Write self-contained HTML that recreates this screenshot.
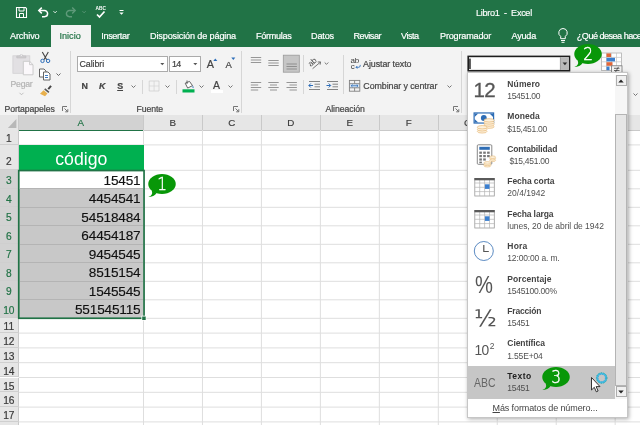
<!DOCTYPE html>
<html lang="es">
<head>
<meta charset="utf-8">
<title>Libro1 - Excel</title>
<style>
html,body{margin:0;padding:0;}
body{width:640px;height:425px;overflow:hidden;position:relative;background:#fff;will-change:transform;font-family:"Liberation Sans",sans-serif;font-size:9px;color:#444;}
.abs{position:absolute;}
#top{left:0;top:0;width:640px;height:47px;background:#217346;}
.tab{position:absolute;top:30.5px;color:#fff;-webkit-text-stroke:0.2px currentColor;font-size:9.1px;line-height:11px;white-space:nowrap;}
#inicio{left:51px;top:25px;width:39.5px;height:22px;background:#f3f3f3;}
#inicio span{position:absolute;left:8.5px;top:5.5px;color:#217346;-webkit-text-stroke:0.2px currentColor;font-size:9.1px;line-height:11px;}
#title{left:476px;top:8px;-webkit-text-stroke:0.15px currentColor;letter-spacing:-0.3px;color:#fff;font-size:9.1px;line-height:11px;white-space:nowrap;}
#ribbon{left:0;top:47px;width:640px;height:68px;background:#f3f3f3;}
.rt{position:absolute;font-size:8.7px;letter-spacing:-0.08px;-webkit-text-stroke:0.2px currentColor;line-height:11px;color:#444;white-space:nowrap;}
.vsep{position:absolute;width:1px;background:#d6d6d6;}
/* sheet */
#sheet{left:0;top:115px;width:640px;height:310px;background:#fff;}
.colh{position:absolute;top:0;height:14.8px;background:#e6e6e6;color:#3a3a3a;font-size:9.8px;-webkit-text-stroke:0.15px currentColor;line-height:15.3px;text-align:center;border-right:1px solid #c9c9c9;box-sizing:border-box;}
.rowh{position:absolute;left:0;width:18.7px;background:#e6e6e6;color:#3a3a3a;font-size:10.2px;-webkit-text-stroke:0.2px currentColor;text-align:center;border-bottom:1px solid #cfcfcf;border-right:1px solid #c9c9c9;box-sizing:border-box;}
.rowh.sel{background:#d2d2d2;color:#217346;border-right:1.5px solid #217346;}
.hl{position:absolute;left:18.7px;width:622px;height:1px;background:#d9d9d9;}
.vl{position:absolute;top:15px;width:1px;height:310px;background:#d9d9d9;}
.num{position:absolute;left:18.7px;width:121.8px;text-align:right;color:#111;-webkit-text-stroke:0.15px currentColor;font-size:13.6px;letter-spacing:-0.17px;line-height:18.4px;height:18.4px;}
/* dropdown */
#dd{left:467px;top:72px;width:159.4px;height:344.3px;background:#fff;border:1px solid #c6c6c6;box-sizing:content-box;box-shadow:0.5px 1px 4px rgba(0,0,0,.33);}
.it{position:absolute;left:0.3px;width:146.5px;height:32.45px;}
.it b{position:absolute;left:39px;top:5.2px;font-size:8.5px;line-height:11px;color:var(--tc,#444);white-space:nowrap;}
.it i{position:absolute;left:39px;top:17.4px;font-style:normal;font-size:8.5px;line-height:11px;color:#505050;white-space:nowrap;}
.ic{position:absolute;left:5.7px;top:3px;width:26px;height:26px;}
</style>
</head>
<body>
<div id="top" class="abs"></div>
<div id="title" class="abs">Libro1 &nbsp;-&nbsp; Excel</div>
<div class="tab" style="left:10.0px;letter-spacing:-0.11px">Archivo</div>
<div id="inicio" class="abs"><span>Inicio</span></div>
<div class="tab" style="left:101.2px;letter-spacing:-0.32px">Insertar</div>
<div class="tab" style="left:150.0px;letter-spacing:-0.14px">Disposición de página</div>
<div class="tab" style="left:256.0px;letter-spacing:-0.30px">Fórmulas</div>
<div class="tab" style="left:311.0px;letter-spacing:-0.16px">Datos</div>
<div class="tab" style="left:353.5px;letter-spacing:-0.47px">Revisar</div>
<div class="tab" style="left:401.0px;letter-spacing:-0.52px">Vista</div>
<div class="tab" style="left:440.0px;letter-spacing:-0.19px">Programador</div>
<div class="tab" style="left:511.5px;letter-spacing:-0.22px">Ayuda</div>
<div class="tab" style="left:576.8px;letter-spacing:-0.52px">¿Qué desea hace</div>
<div id="ribbon" class="abs"></div>
<!-- quick access toolbar -->
<svg class="abs" style="left:0;top:0" width="160" height="25" viewBox="0 0 160 25">
 <g fill="none" stroke="#fff" stroke-width="1.1">
  <path d="M16.5 7.5h9l1 1v9h-10z"/><path d="M19 7.5v3.5h5v-3.5M19.5 17.5v-4h4v4" stroke-width="1"/>
  <path d="M39 10.5h5.5a3 3 0 0 1 0 6.2h-2.5" stroke-width="1.5"/><path d="M41.8 7.6l-3 2.9 3 2.9" stroke-width="1.5"/>
  <path d="M53.5 11.2l1.6 1.6 1.6-1.6" stroke-width="0.9"/>
  <g stroke="#5f9a7a"><path d="M75 10.5h-5.500a3 3 0 0 0 0 6.2h2.500" stroke-width="1.4"/><path d="M72.2 7.600l3 2.900-3 2.900" stroke-width="1.4"/><path d="M82.500 11.200l1.600 1.600 1.600-1.600" stroke-width="0.9"/></g>
  <path d="M97 14.500l2.500 2.500 5-5.500" stroke-width="1.700"/>
  <path d="M119.500 10.500h4" stroke-width="1"/>
 </g>
 <path d="M119.300 12.500h4.400l-2.200 2.300z" fill="#fff"/>
 <text x="95.500" y="10" font-family="Liberation Sans, sans-serif" font-size="4.800" font-weight="bold" fill="#fff">ABC</text>
</svg>
<!-- lightbulb -->
<svg class="abs" style="left:556px;top:27px" width="14" height="17" viewBox="0 0 14 17"><g fill="none" stroke="#fff" stroke-width="1"><path d="M7 1.500a4.300 4.300 0 0 0-2.300 7.900v2.300h4.600v-2.300a4.300 4.300 0 0 0-2.300-7.900z"/><path d="M5 13.500h4M5.500 15.300h3"/></g></svg>

<!-- Clipboard group -->
<svg class="abs" style="left:10px;top:50px" width="26" height="28" viewBox="10 50 26 28">
 <rect x="12.900" y="55.800" width="16.900" height="17.500" fill="#e2e0e3" stroke="#d2d0d3" stroke-width="0.800"/>
 <path d="M16.800 57.900v-1.900h2.800a1.800 1.800 0 0 1 3.500 0h2.800v1.900z" fill="#d0ced1" stroke="#c2c0c3" stroke-width="0.700"/>
 <circle cx="21.350" cy="55.300" r="0.700" fill="#f3f3f3"/>
 <path d="M23.300 61.300h6.300l3.400 3.400v10.100h-9.700z" fill="#fbf8fb" stroke="#c6c6c6" stroke-width="0.900"/>
 <path d="M29.600 61.300v3.400h3.400" fill="none" stroke="#c6c6c6" stroke-width="0.900"/>
</svg>
<div class="rt" style="left:10.500px;top:78.5px;color:#b4b4b4;letter-spacing:-0.25px">Pegar</div>
<svg class="abs" style="left:18px;top:91px" width="8" height="6"><path d="M1.500 1.800l2 2 2-2" fill="none" stroke="#b8b8b8" stroke-width="0.9"/></svg>
<!-- scissors -->
<svg class="abs" style="left:39px;top:50px" width="13" height="14" viewBox="0 0 13 14"><g fill="none"><path d="M3.300 2l4.400 7.700M9.300 2l-4.400 7.700" stroke="#444" stroke-width="1.100"/><circle cx="3.500" cy="10.900" r="1.700" stroke="#2b6cb8" stroke-width="1"/><circle cx="9.100" cy="10.900" r="1.700" stroke="#2b6cb8" stroke-width="1"/></g></svg>
<!-- copy -->
<svg class="abs" style="left:38px;top:68px" width="14" height="13" viewBox="0 0 14 13"><g fill="#fff" stroke="#555" stroke-width="0.9"><path d="M1.500 1h4.500l2 2v6h-6.500z"/><path d="M5.500 4h4.500l2 2v6h-6.500z"/></g><path d="M7 7.500h3M7 9.500h3" stroke="#2b6cb8" stroke-width="0.900"/></svg>
<svg class="abs" style="left:54.500px;top:71.500px" width="8" height="6"><path d="M1.500 1.500l2 2 2-2" fill="none" stroke="#555" stroke-width="0.900"/></svg>
<!-- format painter -->
<svg class="abs" style="left:39px;top:84px" width="14" height="13" viewBox="0 0 14 13"><path d="M8.500 4.500l2.800-3.200 1.500 1.300-2.800 3.200z" fill="#444"/><path d="M6.200 4.300l4.200 3.500-1 1.200-4.200-3.500z" fill="#555"/><path d="M4.600 6.200l3.900 3.300-2.500 2.800-5-2.500z" fill="#e8b04c"/></svg>
<div class="rt" style="left:4.500px;top:103.500px">Portapapeles</div>
<svg class="abs lau" style="left:62px;top:106px" width="7" height="7" viewBox="0 0 7 7"><path d="M0.500 5v-4.500h4.500" fill="none" stroke="#666" stroke-width="0.900"/><path d="M2.500 2.500l3 3M5.800 3.200v2.600h-2.600" fill="none" stroke="#666" stroke-width="0.900"/></svg>
<div class="vsep" style="left:69.800px;top:50.500px;height:62px"></div>

<!-- Font group -->
<div class="abs" style="left:76.700px;top:55.500px;width:91px;height:16.500px;background:#fff;border:1px solid #ababab;box-sizing:border-box"></div>
<div class="rt" style="left:79.500px;top:58.500px;font-size:8.9px">Calibri</div>
<svg class="abs" style="left:158.500px;top:61.500px" width="7" height="5"><path d="M1.300 1h4l-2 2.300z" fill="#555"/></svg>
<div class="abs" style="left:169.300px;top:55.500px;width:31.500px;height:16.500px;background:#fff;border:1px solid #ababab;box-sizing:border-box"></div>
<div class="rt" style="left:172px;top:58.500px;font-size:8.9px;letter-spacing:-0.7px">14</div>
<svg class="abs" style="left:192px;top:61.500px" width="7" height="5"><path d="M1.300 1h4l-2 2.300z" fill="#555"/></svg>
<div class="rt" style="left:206.800px;top:57.800px;font-size:10.800px;line-height:13px">A</div>
<svg class="abs" style="left:212.500px;top:57.500px" width="5" height="4"><path d="M0.300 3l2-2.500 2 2.500z" fill="#2b6cb8"/></svg>
<div class="rt" style="left:225.500px;top:59px;font-size:9.500px;line-height:11px">A</div>
<svg class="abs" style="left:231px;top:57px" width="5" height="4"><path d="M0.300 0.500h4l-2 2.500z" fill="#2b6cb8"/></svg>
<div class="rt" style="left:81.500px;top:80.500px;font-weight:bold;font-size:8.9px">N</div>
<div class="rt" style="left:99px;top:80.500px;font-weight:bold;font-style:italic;font-size:8.9px">K</div>
<div class="rt" style="left:117.200px;top:80.500px;font-weight:bold;font-size:8.9px;text-decoration:underline">S</div>
<svg class="abs" style="left:130px;top:83.500px" width="8" height="6"><path d="M1.500 1.500l2 2 2-2" fill="none" stroke="#666" stroke-width="0.900"/></svg>
<div class="vsep" style="left:142.200px;top:80px;height:14px"></div>
<svg class="abs" style="left:148px;top:80px" width="12" height="12" viewBox="0 0 12 12"><g fill="none" stroke="#c8c8c8" stroke-width="0.650"><path d="M1.200 1h9.800v10h-9.800z"/><path d="M6.100 1v10M1.200 6h9.800" stroke="#d0d0d0"/></g></svg>
<svg class="abs" style="left:164px;top:83.500px" width="8" height="6"><path d="M1.500 1.500l2 2 2-2" fill="none" stroke="#666" stroke-width="0.900"/></svg>
<div class="vsep" style="left:175.700px;top:80px;height:14px"></div>
<svg class="abs" style="left:182px;top:79px" width="14" height="14" viewBox="0 0 14 14"><path d="M5 1.500v3.500M3.200 4.200l4.300-1.800 3 4.200-4.800 2.500z" fill="#fff" stroke="#555" stroke-width="0.900"/><path d="M10.800 6.500q1.600 2 0.300 2.800q-1.300-0.600-0.300-2.800z" fill="#2b6cb8"/><rect x="0.500" y="10.300" width="12" height="3.200" fill="#00b050"/></svg>
<svg class="abs" style="left:198px;top:83.500px" width="8" height="6"><path d="M1.500 1.500l2 2 2-2" fill="none" stroke="#666" stroke-width="0.900"/></svg>
<div class="rt" style="left:213px;top:79px;font-size:10.500px;line-height:12px">A</div>
<div class="abs" style="left:211px;top:90.200px;width:12px;height:2.600px;background:#fff"></div>
<svg class="abs" style="left:227px;top:83.500px" width="8" height="6"><path d="M1.500 1.500l2 2 2-2" fill="none" stroke="#666" stroke-width="0.900"/></svg>
<div class="rt" style="left:136.500px;top:103.500px">Fuente</div>
<svg class="abs lau" style="left:233px;top:106px" width="7" height="7" viewBox="0 0 7 7"><path d="M0.500 5v-4.500h4.500" fill="none" stroke="#666" stroke-width="0.900"/><path d="M2.500 2.500l3 3M5.800 3.200v2.600h-2.600" fill="none" stroke="#666" stroke-width="0.900"/></svg>
<div class="vsep" style="left:240.800px;top:50.500px;height:62px"></div>

<!-- Alignment group -->
<svg class="abs" style="left:250px;top:54px" width="55" height="20" viewBox="0 0 55 20">
 <rect x="33.300" y="1.200" width="16" height="17" fill="#c6c6c6" stroke="#9a9a9a" stroke-width="0.800"/>
 <g stroke="#858585" stroke-width="0.850"><path d="M0.800 3.500h10.400M0.800 6h10.400M0.800 8.500h10.400"/><path d="M18.300 6.500h10.400M18.300 9h10.400M18.300 11.500h10.400"/><path d="M36.500 10h10.400M36.500 12.500h10.400M36.500 15h10.400"/></g>
</svg>
<div class="vsep" style="left:302.800px;top:55px;height:17px"></div>
<svg class="abs" style="left:250px;top:80px" width="55" height="13" viewBox="0 0 55 13">
 <g stroke="#858585" stroke-width="0.850"><path d="M0.800 2.500h10.400M0.800 5h7.400M0.800 7.500h10.400M0.800 10h7.400"/><path d="M18.300 2.500h10.400M20 5h7M18.300 7.500h10.400M20 10h7"/><path d="M36.500 2.500h10.400M39.500 5h7.400M36.500 7.500h10.400M39.500 10h7.400"/></g>
</svg>
<div class="vsep" style="left:302.800px;top:80px;height:14px"></div>
<!-- orientation -->
<svg class="abs" style="left:305px;top:52px" width="20" height="20" viewBox="305 52 20 20"><text x="312.300" y="64.800" text-anchor="middle" font-family="Liberation Sans, sans-serif" font-size="8.200" fill="#4a4a4a" transform="rotate(-42 312.300 62.200)" letter-spacing="-0.3">ab</text><path d="M312.600 68.700l7.500-6.300M317.700 62l2.900-0.100-0.500 2.800" fill="none" stroke="#666" stroke-width="0.900"/></svg>
<svg class="abs" style="left:322.800px;top:61px" width="8" height="6"><path d="M1.700 1.500l1.800 1.800 1.800-1.800" fill="none" stroke="#666" stroke-width="0.900"/></svg>
<!-- indent icons -->
<svg class="abs" style="left:308px;top:80px" width="32" height="13" viewBox="0 0 32 13">
 <g stroke="#777" stroke-width="0.900"><path d="M1 1.500h11M6.500 4.200h5.500M6.500 6.800h5.500M1 9.500h11"/><path d="M19 1.500h11M24.500 4.200h5.500M24.500 6.800h5.500M19 9.500h11"/></g>
 <g stroke="#2b6cb8" stroke-width="1" fill="none"><path d="M5 5.500h-4M2.800 3.500l-2 2 2 2"/><path d="M18.500 5.500h4M20.700 3.500l2 2-2 2"/></g>
</svg>
<div class="vsep" style="left:343px;top:55px;height:39px"></div>
<!-- wrap text -->
<svg class="abs" style="left:349px;top:55px" width="14" height="16" viewBox="0 0 14 16"><text x="1.500" y="7.800" font-family="Liberation Sans, sans-serif" font-size="8" fill="#3a3a3a" letter-spacing="-0.3">ab</text><text x="1.800" y="13.600" font-family="Liberation Sans, sans-serif" font-size="8" fill="#3a3a3a">c</text><path d="M7 12.300h2.600a1.600 1.600 0 0 0 1.600-1.600v-0.800M8.300 11l-1.300 1.300 1.300 1.300" fill="none" stroke="#2b6cb8" stroke-width="0.900"/></svg>
<div class="rt" style="left:363.100px;top:58.700px;font-size:8.9px">Ajustar texto</div>
<!-- merge -->
<svg class="abs" style="left:348px;top:79px" width="14" height="14" viewBox="348 79 14 14"><rect x="349.500" y="83.800" width="10.200" height="3.800" fill="#d6e6f7"/><g fill="none" stroke="#808080" stroke-width="0.900"><rect x="349.400" y="80.400" width="10.400" height="10.800"/><path d="M349.400 83.700h10.400M349.400 87.800h10.400M354.600 80.400v3.300M354.600 87.800v3.400"/></g><path d="M351.300 85.750h6.600M352.500 84.500l-1.300 1.250 1.300 1.250M356.700 84.500l1.300 1.250-1.300 1.250" fill="none" stroke="#2b6cb8" stroke-width="0.800"/></svg>
<div class="rt" style="left:363.300px;top:81.200px;font-size:8.9px">Combinar y centrar</div>
<svg class="abs" style="left:445.500px;top:84px" width="8" height="6"><path d="M1.500 1.500l2 2 2-2" fill="none" stroke="#666" stroke-width="0.900"/></svg>
<div class="rt" style="left:325.500px;top:103.500px">Alineación</div>
<svg class="abs lau" style="left:452.500px;top:106px" width="7" height="7" viewBox="0 0 7 7"><path d="M0.500 5v-4.500h4.500" fill="none" stroke="#666" stroke-width="0.900"/><path d="M2.500 2.500l3 3M5.800 3.200v2.600h-2.600" fill="none" stroke="#666" stroke-width="0.900"/></svg>
<div class="vsep" style="left:460.500px;top:50.500px;height:62px"></div>

<!-- Number format combo -->
<svg class="abs" style="left:460px;top:50px" width="120" height="26" viewBox="460 50 120 26">
 <rect x="468.200" y="56.400" width="101.300" height="14.300" fill="#fff" stroke="#1e1e1e" stroke-width="1.600"/>
 <rect x="560.400" y="57.200" width="8.400" height="12.700" fill="#b9b9b9"/>
 <path d="M560.400 57.200v12.700" stroke="#8a8a8a" stroke-width="0.800" fill="none"/>
 <path d="M562.600 62.600h4.600l-2.300 2.600z" fill="#2a2a2a"/>
 <rect x="469.200" y="58.600" width="1.500" height="10.400" fill="#222"/>
</svg>
<!-- conditional formatting icon -->
<svg class="abs" style="left:601px;top:52px" width="23" height="21" viewBox="0 0 23 21">
 <rect x="0.500" y="1" width="20" height="17.500" fill="#fff" stroke="#b0b0b0" stroke-width="0.800"/>
 <path d="M0.500 5.400h20M0.500 9.800h20M0.500 14.200h20M5.500 1v17.500M10.500 1v17.500M15.500 1v17.500" stroke="#c4c4c4" stroke-width="0.700" fill="none"/>
 <rect x="5.500" y="1.400" width="4.500" height="3.600" fill="#e0673a"/><rect x="5.500" y="5.800" width="8.500" height="3.600" fill="#3b7fcf"/><rect x="5.500" y="10.200" width="6" height="3.600" fill="#e0673a"/><rect x="5.500" y="14.600" width="3" height="3.600" fill="#3b7fcf"/>
 <rect x="10.500" y="13.800" width="10.500" height="7" fill="#f3f3f3" stroke="#777" stroke-width="0.800"/>
 <path d="M13 16.300h5.500M13 18.500h5.500M17.500 14.800l-3 5.300" stroke="#444" stroke-width="0.800" fill="none"/>
</svg>
<svg class="abs" style="left:631.500px;top:92px" width="8" height="6"><path d="M1.500 1.500l2 2 2-2" fill="none" stroke="#666" stroke-width="0.900"/></svg>

<div id="sheet" class="abs">
<div class="abs" style="left:0;top:0;width:18.7px;height:14.8px;background:#e6e6e6;border-right:1px solid #c9c9c9;box-sizing:border-box"></div>
<svg class="abs" style="left:7px;top:3.8px" width="11" height="10"><path d="M9.4 0V9H0.9Z" fill="#b8b8b8"/></svg>
<div class="colh" style="left:18.7px;width:125.2px;background:#d2d2d2;color:#217346;border-bottom:1.6px solid #217346;line-height:15.3px;height:15.6px;overflow:hidden;">A</div>
<div class="colh" style="left:143.9px;width:59.0px;">B</div>
<div class="colh" style="left:202.9px;width:59.0px;">C</div>
<div class="colh" style="left:261.8px;width:59.0px;">D</div>
<div class="colh" style="left:320.8px;width:59.0px;">E</div>
<div class="colh" style="left:379.7px;width:59.0px;">F</div>
<div class="colh" style="left:438.7px;width:59.0px;">G</div>
<div class="colh" style="left:497.7px;width:59.0px;">H</div>
<div class="colh" style="left:556.6px;width:59.0px;">I</div>
<div class="colh" style="left:615.6px;width:59.0px;">J</div>
<div class="abs" style="left:0;top:14.6px;width:18.7px;height:1px;background:#c9c9c9"></div>
<div class="abs" style="left:143.9px;top:14.6px;width:497px;height:1px;background:#c9c9c9"></div>
<div class="rowh" style="top:15.00px;height:14.90px;line-height:18.00px">1</div>
<div class="rowh" style="top:29.90px;height:25.40px;line-height:33.50px">2</div>
<div class="rowh sel" style="top:55.30px;height:18.50px;line-height:22.80px">3</div>
<div class="rowh sel" style="top:73.80px;height:18.50px;line-height:22.80px">4</div>
<div class="rowh sel" style="top:92.30px;height:18.50px;line-height:22.80px">5</div>
<div class="rowh sel" style="top:110.80px;height:18.50px;line-height:22.80px">6</div>
<div class="rowh sel" style="top:129.30px;height:18.50px;line-height:22.80px">7</div>
<div class="rowh sel" style="top:147.80px;height:18.50px;line-height:22.80px">8</div>
<div class="rowh sel" style="top:166.30px;height:18.50px;line-height:22.80px">9</div>
<div class="rowh sel" style="top:184.80px;height:18.50px;line-height:22.80px">10</div>
<div class="rowh" style="top:203.30px;height:14.80px;line-height:17.90px">11</div>
<div class="rowh" style="top:218.10px;height:14.80px;line-height:17.90px">12</div>
<div class="rowh" style="top:232.90px;height:14.80px;line-height:17.90px">13</div>
<div class="rowh" style="top:247.70px;height:14.80px;line-height:17.90px">14</div>
<div class="rowh" style="top:262.50px;height:14.80px;line-height:17.90px">15</div>
<div class="rowh" style="top:277.30px;height:14.80px;line-height:17.90px">16</div>
<div class="rowh" style="top:292.10px;height:14.80px;line-height:17.90px">17</div>
<div class="rowh" style="top:306.90px;height:14.80px;line-height:17.90px">18</div>
<svg class="abs" style="left:0;top:0" width="640" height="310"><path d="M18.7 29.90H640M18.7 55.30H640M18.7 73.80H640M18.7 92.30H640M18.7 110.80H640M18.7 129.30H640M18.7 147.80H640M18.7 166.30H640M18.7 184.80H640M18.7 203.30H640M18.7 218.10H640M18.7 232.90H640M18.7 247.70H640M18.7 262.50H640M18.7 277.30H640M18.7 292.10H640M18.7 306.90H640M18.7 321.70H640M143.50 15V310M202.46 15V310M261.42 15V310M320.38 15V310M379.34 15V310M438.30 15V310M497.26 15V310M556.22 15V310M615.18 15V310M674.14 15V310" fill="none" stroke="#dedede" stroke-width="1"/></svg>
<div class="abs" style="left:18.7px;top:29.60px;width:125.3px;height:25.70px;background:#00b050;color:#fff;font-size:17.7px;line-height:28.5px;text-align:center">código</div>
<div class="abs" style="left:18.7px;top:73.80px;width:124.9px;height:129.50px;background:#c8c8c8"></div>
<div class="abs" style="left:18.7px;top:55.30px;width:124.9px;height:18.52px;background:#fff"></div>
<div class="abs" style="left:19.7px;top:73.20px;width:123.3px;height:1px;background:#b4b4b4"></div>
<div class="abs" style="left:19.7px;top:91.70px;width:123.3px;height:1px;background:#b4b4b4"></div>
<div class="abs" style="left:19.7px;top:110.20px;width:123.3px;height:1px;background:#b4b4b4"></div>
<div class="abs" style="left:19.7px;top:128.70px;width:123.3px;height:1px;background:#b4b4b4"></div>
<div class="abs" style="left:19.7px;top:147.20px;width:123.3px;height:1px;background:#b4b4b4"></div>
<div class="abs" style="left:19.7px;top:165.70px;width:123.3px;height:1px;background:#b4b4b4"></div>
<div class="abs" style="left:19.7px;top:184.20px;width:123.3px;height:1px;background:#b4b4b4"></div>
<div class="num" style="top:56.60px">15451</div>
<div class="num" style="top:75.10px">4454541</div>
<div class="num" style="top:93.60px">54518484</div>
<div class="num" style="top:112.10px">64454187</div>
<div class="num" style="top:130.60px">9454545</div>
<div class="num" style="top:149.10px">8515154</div>
<div class="num" style="top:167.60px">1545545</div>
<div class="num" style="top:186.10px">551545115</div>
<svg class="abs" style="left:0;top:0" width="160" height="310"><rect x="18.75" y="55.55" width="125.3" height="147.70" fill="none" stroke="#217346" stroke-width="1.7"/><rect x="141.4" y="200.70" width="5" height="5" fill="#fff"/><rect x="142.2" y="201.50" width="3.5" height="3.5" fill="#217346"/></svg>
</div>
<div id="dd" class="abs">
<div class="it" style="top:0.70px;"><div class="abs" style="left:5.2px;top:6.1px;font-size:20.5px;line-height:20px;color:#555;letter-spacing:-0.600px;-webkit-text-stroke:0.3px #555">12</div><b style="letter-spacing:0.13px">Número</b><i style="letter-spacing:-0.32px">15451.00</i></div>
<div class="it" style="top:33.15px;"><svg class="abs" style="left:4.200px;top:5px" width="26" height="24" viewBox="0 0 26 24"><rect x="2.100" y="1.950" width="19.500" height="10.100" fill="#fff" stroke="#2e6db5" stroke-width="1.200"/><ellipse cx="11.800" cy="7" rx="2.900" ry="2.900" fill="#2e6db5"/><path d="M2.600 2.500h3.600l-3.600 3.600zM21.100 2.500h-3.600l3.600 3.600zM2.600 11.500h3.600l-3.600-3.600z" fill="#2e6db5"/><ellipse cx="17.05" cy="15.65" rx="5.15" ry="1.70" fill="#fdf1dc" stroke="#e6b877" stroke-width="0.70"/><ellipse cx="17.05" cy="13.55" rx="5.15" ry="1.70" fill="#fdf1dc" stroke="#e6b877" stroke-width="0.70"/><ellipse cx="17.05" cy="11.45" rx="5.15" ry="1.70" fill="#fdf1dc" stroke="#e6b877" stroke-width="0.70"/><ellipse cx="17.05" cy="9.35" rx="5.15" ry="1.70" fill="#fdf1dc" stroke="#e6b877" stroke-width="0.70"/><ellipse cx="10.15" cy="20.35" rx="4.85" ry="1.70" fill="#fdf1dc" stroke="#e6b877" stroke-width="0.70"/><ellipse cx="10.15" cy="18.30" rx="4.85" ry="1.70" fill="#fdf1dc" stroke="#e6b877" stroke-width="0.70"/><ellipse cx="10.15" cy="16.25" rx="4.85" ry="1.70" fill="#fdf1dc" stroke="#e6b877" stroke-width="0.70"/></svg><b style="letter-spacing:0.06px">Moneda</b><i style="letter-spacing:-0.30px">$15,451.00</i></div>
<div class="it" style="top:65.60px;"><svg class="abs" style="left:6.7px;top:5.2px" width="24" height="24" viewBox="0 0 24 24"><rect x="2.300" y="0.800" width="14.500" height="19.500" rx="1" fill="#fff" stroke="#7a7a7a" stroke-width="0.900"/><rect x="4.300" y="2.800" width="10.500" height="3" fill="#2e6db5"/><g fill="#777"><rect x="4.300" y="7.600" width="2.600" height="2.200"/><rect x="8.200" y="7.600" width="2.600" height="2.200"/><rect x="12.100" y="7.600" width="2.600" height="2.200"/><rect x="4.300" y="11" width="2.600" height="2.200"/><rect x="8.200" y="11" width="2.600" height="2.200"/><rect x="12.100" y="11" width="2.600" height="2.200"/><rect x="4.300" y="14.400" width="2.600" height="2.200"/><rect x="8.200" y="14.400" width="2.600" height="2.200"/><rect x="4.300" y="17.600" width="2.600" height="1.600"/></g><ellipse cx="17.65" cy="16.30" rx="2.95" ry="1.30" fill="#fdf1dc" stroke="#e6b877" stroke-width="0.60"/><ellipse cx="17.65" cy="14.75" rx="2.95" ry="1.30" fill="#fdf1dc" stroke="#e6b877" stroke-width="0.60"/><ellipse cx="17.65" cy="13.20" rx="2.95" ry="1.30" fill="#fdf1dc" stroke="#e6b877" stroke-width="0.60"/><ellipse cx="12.40" cy="21.70" rx="3.50" ry="1.30" fill="#fdf1dc" stroke="#e6b877" stroke-width="0.60"/><ellipse cx="12.40" cy="20.30" rx="3.50" ry="1.30" fill="#fdf1dc" stroke="#e6b877" stroke-width="0.60"/><ellipse cx="12.40" cy="18.90" rx="3.50" ry="1.30" fill="#fdf1dc" stroke="#e6b877" stroke-width="0.60"/></svg><b style="letter-spacing:-0.13px">Contabilidad</b><i style="letter-spacing:-0.27px">&nbsp;$15,451.00</i></div>
<div class="it" style="top:98.05px;"><svg class="abs" style="left:5.8px;top:5.6px" width="22" height="21" viewBox="0 0 22 21"><rect x="0.800" y="1.500" width="19.500" height="17.500" fill="#fff" stroke="#9a9a9a" stroke-width="0.800"/><path d="M0.800 6h19.500M0.800 10.300h19.500M0.800 14.600h19.500M5.700 3v16M10.600 3v16M15.500 3v16" stroke="#b4b4b4" stroke-width="0.700" fill="none"/><rect x="0.400" y="1" width="20.300" height="2.300" fill="#5a5a5a"/><rect x="10.900" y="7.300" width="4.600" height="4.600" fill="#3b7fcf"/></svg><b style="letter-spacing:-0.06px">Fecha corta</b><i style="letter-spacing:0.03px">20/4/1942</i></div>
<div class="it" style="top:130.50px;"><svg class="abs" style="left:5.8px;top:5.3px" width="22" height="21" viewBox="0 0 22 21"><rect x="0.800" y="1.500" width="19.500" height="17.500" fill="#fff" stroke="#9a9a9a" stroke-width="0.800"/><path d="M0.800 6h19.500M0.800 10.300h19.500M0.800 14.600h19.500M5.700 3v16M10.600 3v16M15.500 3v16" stroke="#b4b4b4" stroke-width="0.700" fill="none"/><rect x="0.400" y="1" width="20.300" height="2.300" fill="#5a5a5a"/><rect x="10.900" y="7.300" width="4.600" height="4.600" fill="#3b7fcf"/></svg><b style="letter-spacing:-0.10px">Fecha larga</b><i style="letter-spacing:-0.05px">lunes, 20 de abril de 1942</i></div>
<div class="it" style="top:162.95px;"><svg class="abs" style="left:5px;top:4.100px" width="22" height="22" viewBox="0 0 22 22"><circle cx="10.800" cy="11" r="9.500" fill="#fff" stroke="#4a7ebb" stroke-width="0.900"/><path d="M10.800 5v6.500h5" fill="none" stroke="#555" stroke-width="1.200"/></svg><b style="letter-spacing:0.21px">Hora</b><i style="letter-spacing:-0.15px">12:00:00 a. m.</i></div>
<div class="it" style="top:195.40px;"><div class="abs" style="left:6.300px;top:3.200px;font-size:24.600px;line-height:26px;color:#555;transform:scaleX(0.82);transform-origin:0 0">%</div><b style="letter-spacing:0.07px">Porcentaje</b><i style="letter-spacing:-0.28px">1545100.00%</i></div>
<div class="it" style="top:227.85px;"><div class="abs" style="left:5.600px;top:5.400px;font-size:23.500px;line-height:24px;color:#555;font-family:'DejaVu Sans','Liberation Sans',sans-serif;transform:scaleX(1);transform-origin:0 0">½</div><b style="letter-spacing:-0.19px">Fracción</b><i style="letter-spacing:-0.31px">15451</i></div>
<div class="it" style="top:260.30px;"><div class="abs" style="left:6.300px;top:10.100px;font-size:13.800px;line-height:15px;color:#555;letter-spacing:-0.800px">10<span style="font-size:8.500px;position:relative;top:-6.200px;left:1.500px">2</span></div><b style="letter-spacing:-0.06px">Científica</b><i style="letter-spacing:-0.17px">1.55E+04</i></div>
<div class="it" style="top:292.75px;background:#c6c6c6;height:32.800px;--tc:#222;"><div class="abs" style="left:5.500px;top:10.700px;font-size:12.300px;line-height:14px;color:#666;transform:scaleX(0.85);transform-origin:0 0">ABC</div><b style="letter-spacing:0.49px">Texto</b><i style="letter-spacing:-0.31px">15451</i></div>
<div class="abs" style="left:24.500px;top:329.500px;font-size:9px;line-height:11px;color:#444;white-space:nowrap;letter-spacing:-0.1px"><u>M</u>ás formatos de número...</div>
<div class="abs" style="left:147.200px;top:1.500px;width:12px;height:324px;background:#f6f6f6"></div>
<div class="abs" style="left:147.700px;top:2.200px;width:11px;height:11px;background:#f0f0f0;border:1px solid #adadad;box-sizing:border-box"></div>
<svg class="abs" style="left:150px;top:5.800px" width="6" height="4"><path d="M0.300 3.500l2.700-3 2.700 3z" fill="#222"/></svg>
<div class="abs" style="left:147.400px;top:40.500px;width:11.400px;height:272.500px;background:#e6e6e6;border:1px solid #b4b4b4;box-sizing:border-box"></div>
<div class="abs" style="left:147.700px;top:313.200px;width:11px;height:10.500px;background:#f0f0f0;border:1px solid #adadad;box-sizing:border-box"></div>
<svg class="abs" style="left:150px;top:316.700px" width="6" height="4"><path d="M0.300 0.500h5.400l-2.700 3z" fill="#222"/></svg>
</div>
<svg class="abs" style="left:570.7px;top:41.9px" width="34" height="28" viewBox="-17 -12 34 28"><ellipse cx="0" cy="0" rx="13.75" ry="10.05" fill="#089708"/><path d="M-10.300 6.200Q-8.600 11.400 -13.600 12.900Q-7.800 13.300 -5.300 8.800Z" fill="#089708"/><text transform="translate(0.2 5.900) scale(0.860 1)" text-anchor="middle" font-family="DejaVu Sans Light, DejaVu Sans, sans-serif" font-weight="200" font-size="17.800" fill="#fff" stroke="#fff" stroke-width="0.45">2</text></svg>
<svg class="abs" style="left:539.3px;top:365.1px" width="34" height="28" viewBox="-17 -12 34 28"><ellipse cx="0" cy="0" rx="13.75" ry="10.05" fill="#089708"/><path d="M-10.300 6.200Q-8.600 11.400 -13.600 12.900Q-7.800 13.300 -5.300 8.800Z" fill="#089708"/><text transform="translate(0.2 5.900) scale(0.860 1)" text-anchor="middle" font-family="DejaVu Sans Light, DejaVu Sans, sans-serif" font-weight="200" font-size="17.800" fill="#fff" stroke="#fff" stroke-width="0.45">3</text></svg>
<svg class="abs" style="left:144.6px;top:171.7px" width="34" height="28" viewBox="-17 -12 34 28"><ellipse cx="0" cy="0" rx="13.75" ry="10.05" fill="#089708"/><path d="M-10.300 6.200Q-8.600 11.400 -13.600 12.900Q-7.800 13.300 -5.300 8.800Z" fill="#089708"/><text transform="translate(0.2 5.900) scale(0.860 1)" text-anchor="middle" font-family="DejaVu Sans Light, DejaVu Sans, sans-serif" font-weight="200" font-size="17.800" fill="#fff" stroke="#fff" stroke-width="0.45">1</text></svg>
<svg class="abs" style="left:589px;top:370px" width="22" height="24" viewBox="0 0 22 24"><circle cx="12.700" cy="8" r="4.500" fill="none" stroke="#41bde3" stroke-width="2.100"/><circle cx="12.700" cy="8" r="5.300" fill="none" stroke="#2f9a8f" stroke-width="0.700" stroke-dasharray="1.300 1.300"/><circle cx="12.700" cy="8" r="3.600" fill="none" stroke="#2c8fd6" stroke-width="0.600" stroke-dasharray="1.200 1.200"/><path d="M2.500 7.500v12.500l2.800-2.700 2 4.500 1.800-0.800-2-4.400h3.900z" fill="#fff" stroke="#222" stroke-width="0.900"/></svg>
</body>
</html>
